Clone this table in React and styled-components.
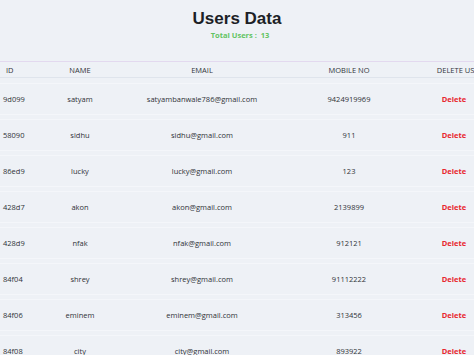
import styled, { createGlobalStyle } from "styled-components";

const Global = createGlobalStyle`
  html, body {
    margin: 0;
    padding: 0;
    background: #eef1f6;
    overflow: hidden;
  }
  body {
    font-family: "Open Sans", "Noto Sans", sans-serif;
  }
`;

const users = [
  { id: "9d099", name: "satyam", email: "satyambanwale786@gmail.com", mobile: "9424919969" },
  { id: "58090", name: "sidhu", email: "sidhu@gmail.com", mobile: "911" },
  { id: "86ed9", name: "lucky", email: "lucky@gmail.com", mobile: "123" },
  { id: "428d7", name: "akon", email: "akon@gmail.com", mobile: "2139899" },
  { id: "428d9", name: "nfak", email: "nfak@gmail.com", mobile: "912121" },
  { id: "84f04", name: "shrey", email: "shrey@gmail.com", mobile: "91112222" },
  { id: "84f06", name: "eminem", email: "eminem@gmail.com", mobile: "313456" },
  { id: "84f08", name: "city", email: "city@gmail.com", mobile: "893922" },
  { id: "84f0a", name: "raju", email: "raju@gmail.com", mobile: "778899" },
  { id: "84f0c", name: "arjun", email: "arjun@gmail.com", mobile: "445566" },
  { id: "84f0e", name: "karan", email: "karan@gmail.com", mobile: "112233" },
  { id: "84f10", name: "neha", email: "neha@gmail.com", mobile: "998877" },
  { id: "84f12", name: "riya", email: "riya@gmail.com", mobile: "665544" },
];

function App() {
  return (
    <Page>
      <Global />
      <Top>
        <h1>Users Data</h1>
        <p>Total Users : &nbsp;{users.length}</p>
      </Top>
      <Table>
        <HeadRow>
          <Cell $left>ID</Cell>
          <Cell>NAME</Cell>
          <Cell>EMAIL</Cell>
          <Cell>MOBILE NO</Cell>
          <Cell $shift>DELETE USER</Cell>
        </HeadRow>
        {users.map((u) => (
          <Row key={u.id}>
            <Cell $left $tight>{u.id}</Cell>
            <Cell>{u.name}</Cell>
            <Cell>{u.email}</Cell>
            <Cell>{u.mobile}</Cell>
            <Cell>
              <DeleteBtn>Delete</DeleteBtn>
            </Cell>
          </Row>
        ))}
      </Table>
    </Page>
  );
}

export default App;

const Page = styled.div`
  width: 474px;
  height: 355px;
  overflow: hidden;
`;

const Top = styled.div`
  display: flex;
  flex-direction: column;
  align-items: center;
  padding-top: 7px;
  height: 54px;

  h1 {
    margin: 0;
    font-family: "Liberation Sans", Arial, sans-serif;
    font-size: 17px;
    font-weight: bold;
    color: #1c1f26;
    line-height: 24px;
  }

  p {
    margin: 0;
    padding-left: 6px;
    font-size: 7.5px;
    font-weight: bold;
    color: #62c462;
    line-height: 8px;
  }
`;

const cols = "40px 80px 164px 130px 96px";

const Table = styled.div`
  width: 510px;
  display: flex;
  flex-direction: column;
`;

const HeadRow = styled.div`
  display: grid;
  grid-template-columns: ${cols};
  align-items: center;
  height: 15px;
  border-top: 1px solid #e3d9ef;
  border-bottom: 1px solid #dfe4ec;
  margin-bottom: 5px;
  font-size: 7.5px;
  color: #33363c;
`;

const Row = styled.div`
  display: grid;
  grid-template-columns: ${cols};
  align-items: center;
  height: 30px;
  border-top: 1px solid #f4f6fa;
  border-bottom: 1px solid #f4f6fa;
  margin-bottom: 4px;
  font-size: 7.5px;
  color: #2e3137;
`;

const Cell = styled.div`
  text-align: ${(p) => (p.$left ? "left" : "center")};
  padding-left: ${(p) => (p.$left ? (p.$tight ? "3px" : "6px") : "0")};
  margin-left: ${(p) => (p.$shift ? "-4px" : "0")};
  white-space: nowrap;
`;

const DeleteBtn = styled.span`
  color: #e8262e;
  font-weight: bold;
  cursor: pointer;
  margin-left: -16px;
`;
